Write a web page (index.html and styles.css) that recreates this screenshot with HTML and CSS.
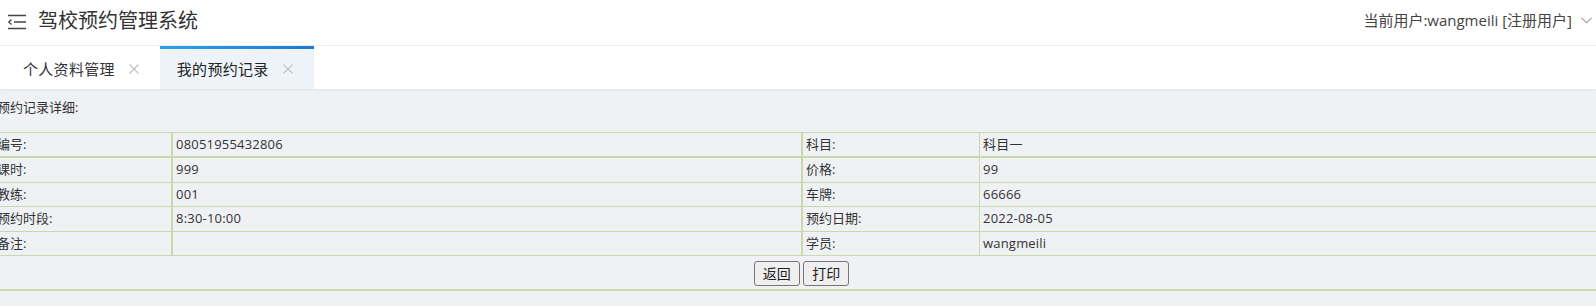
FILE: index.html
```html
<!DOCTYPE html>
<html lang="zh-CN">
<head>
<meta charset="utf-8">
<title>驾校预约管理系统</title>
<link rel="stylesheet" href="styles.css">
</head>
<body>
<header class="topbar">
  <div class="brand">
    <svg class="menu-icon" width="20" height="16" viewBox="0 0 20 16" aria-hidden="true">
      <path d="M1 1.5H19M7 8H19M1 14.5H19" stroke="#444" stroke-width="1.4" fill="none"/>
      <path d="M4.5 5.5L1.8 8L4.5 10.5" stroke="#444" stroke-width="1.3" fill="none"/>
    </svg>
    <span class="title">驾校预约管理系统</span>
  </div>
  <div class="user">
    <span>当前用户:wangmeili [注册用户]</span>
    <svg class="chevron" width="11" height="7" viewBox="0 0 11 7" aria-hidden="true">
      <path d="M0.5 0.8L5.5 5.8L10.5 0.8" stroke="#999" stroke-width="1.1" fill="none"/>
    </svg>
  </div>
</header>
<nav class="tabs">
  <div class="tab">
    <span>个人资料管理</span>
    <svg class="close" width="10" height="10" viewBox="0 0 10 10" aria-hidden="true"><path d="M0.5 0.5L9.5 9.5M9.5 0.5L0.5 9.5" stroke="#c0c0c0" stroke-width="1.1"/></svg>
  </div>
  <div class="tab active">
    <span>我的预约记录</span>
    <svg class="close" width="10" height="10" viewBox="0 0 10 10" aria-hidden="true"><path d="M0.5 0.5L9.5 9.5M9.5 0.5L0.5 9.5" stroke="#c0c0c0" stroke-width="1.1"/></svg>
  </div>
</nav>
<main class="content">
  <div class="inner">
    <div class="caption">预约记录详细:</div>
    <table class="detail">
      <colgroup>
        <col class="c1"><col class="c2"><col class="c3"><col class="c4">
      </colgroup>
      <tbody>
        <tr class="first">
          <td>编号:</td><td class="v">08051955432806</td><td class="l2">科目:</td><td class="v2">科目一</td>
        </tr>
        <tr>
          <td>课时:</td><td class="v">999</td><td class="l2">价格:</td><td class="v2">99</td>
        </tr>
        <tr>
          <td>教练:</td><td class="v">001</td><td class="l2">车牌:</td><td class="v2">66666</td>
        </tr>
        <tr>
          <td>预约时段:</td><td class="v">8:30-10:00</td><td class="l2">预约日期:</td><td class="v2">2022-08-05</td>
        </tr>
        <tr>
          <td>备注:</td><td class="v"></td><td class="l2">学员:</td><td class="v2">wangmeili</td>
        </tr>
        <tr class="actions">
          <td colspan="4"><button type="button">返回</button> <button type="button">打印</button></td>
        </tr>
      </tbody>
    </table>
  </div>
</main>
</body>
</html>
```

FILE: styles.css
```css
html, body {
  margin: 0;
  padding: 0;
  width: 1596px;
  height: 306px;
  overflow: hidden;
  background: #f0f1f5;
  font-family: "Open Sans", "Noto Sans CJK SC", sans-serif;
  color: #333;
}

.topbar {
  height: 45px;
  background: #fff;
  border-bottom: 1px solid #f0f0f0;
  display: flex;
  align-items: center;
  justify-content: space-between;
  padding: 0 4px 0 7px;
}

.brand {
  display: flex;
  align-items: center;
  gap: 11px;
}

.menu-icon {
  display: block;
  margin-top: -1px;
}

.title {
  font-size: 20px;
  line-height: 26px;
  color: #333;
  margin-top: -3px;
}

.user {
  display: flex;
  align-items: center;
  gap: 9px;
  font-size: 15px;
  color: #444;
  margin-top: -6px;
}

.chevron {
  display: block;
  margin-top: 1px;
}

.tabs {
  height: 43px;
  background: #fff;
  display: flex;
  padding-left: 6px;
  box-shadow: 0 1px 3px rgba(0, 0, 0, 0.06);
  position: relative;
}

.tab {
  display: flex;
  align-items: center;
  gap: 14px;
  padding: 0 21px 0 17px;
  font-size: 15px;
  letter-spacing: 0.3px;
  color: #333;
  border-top: 3px solid transparent;
  box-sizing: border-box;
}

.tab span {
  margin-top: -2px;
}

.tab.active {
  background: #eef3fa;
  color: #222;
  border-top: 3px solid #1e88e5;
  border-image: linear-gradient(90deg, #2aa3e9, #1a7ad6) 1;
}

.close {
  display: block;
  margin-top: 0;
}

.content {
  overflow: hidden;
}

.inner {
  margin: 0 -15px 0 -8px;
  padding-top: 8px;
}

.caption {
  font-size: 13px;
  line-height: 20px;
  padding-left: 5px;
  color: #333;
  margin-bottom: 15px;
}

.detail {
  width: 1619px;
  table-layout: fixed;
  border-collapse: separate;
  border-spacing: 0;
  font-size: 13px;
  color: #333;
}

.c1 { width: 179px; }
.c2 { width: 630px; }
.c3 { width: 178px; }
.c4 { width: 632px; }

.detail td {
  padding: 0 3px 0 5px;
  line-height: 23.6px;
  height: 23.6px;
  border-bottom: 1px solid #cbd9aa;
  white-space: nowrap;
  overflow: hidden;
}

.detail td.v,
.detail td.l2 {
  border-left: 2px solid #cbd9aa;
  padding-left: 3px;
}

.detail td.v2 {
  border-left: 1px solid #cbd9aa;
  padding-left: 3px;
}

.detail td.v,
.detail td.v2 {
  letter-spacing: 0.2px;
}

.detail tr.first td {
  border-top: 1px solid #cbd9aa;
  border-bottom-width: 2px;
  line-height: 23px;
  height: 23px;
}

.detail tr.actions td {
  border-bottom: 2px solid #cbd9aa;
  text-align: center;
  height: 33px;
  padding: 0;
  line-height: 33px;
}

.actions button {
  font-family: "Open Sans", "Noto Sans CJK SC", sans-serif;
  font-size: 14px;
  height: 25px;
  line-height: 21px;
  padding: 0 8px;
  background: #efefef;
  border: 1px solid #767676;
  border-radius: 3px;
  color: #222;
  vertical-align: middle;
}
```
